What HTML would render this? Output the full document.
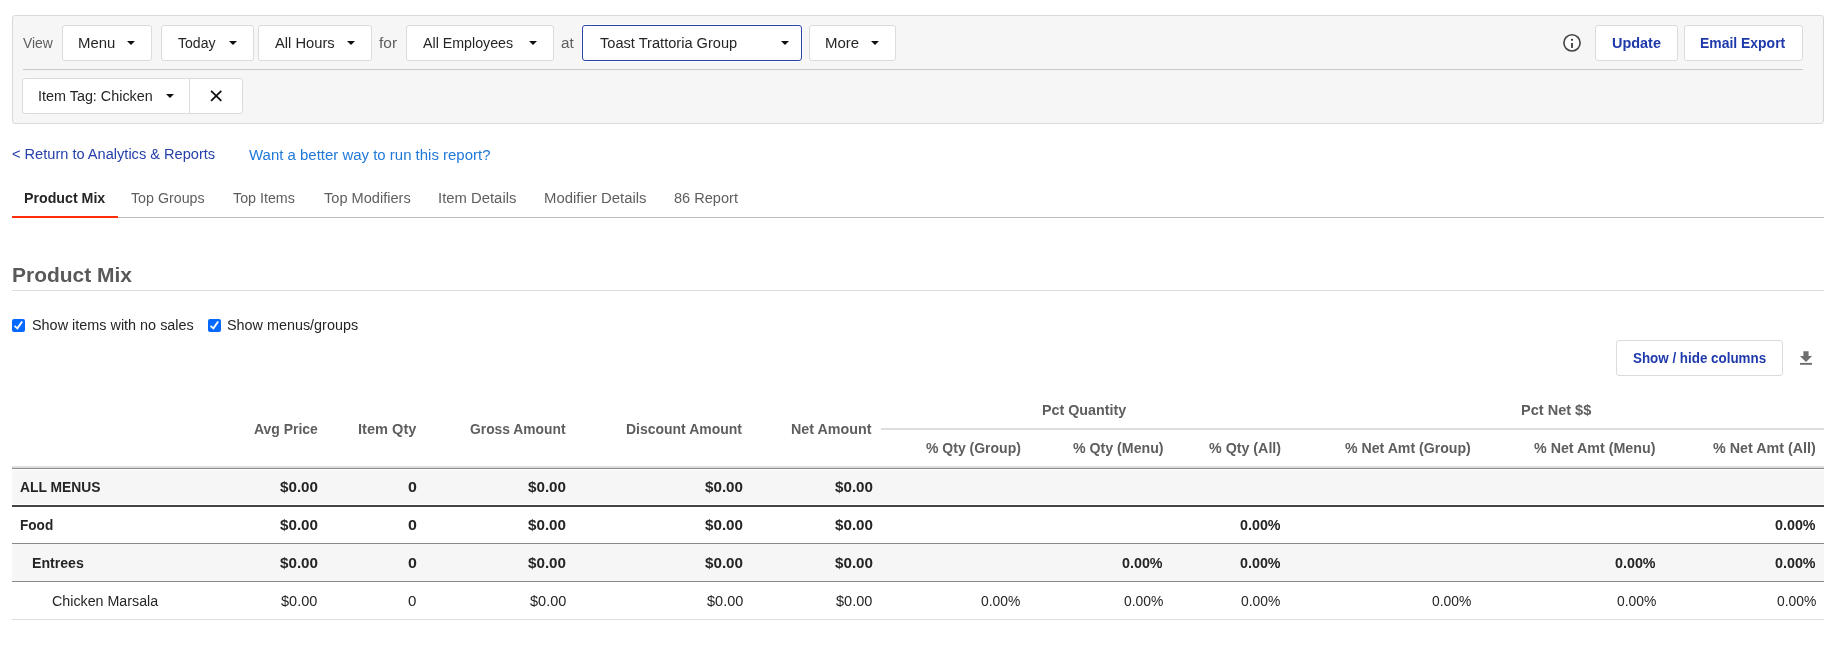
<!DOCTYPE html>
<html><head><meta charset="utf-8"><title>Product Mix</title>
<style>
*{box-sizing:border-box;margin:0;padding:0}
html,body{width:1835px;height:661px;background:#fff;overflow:hidden}
body{font-family:"Liberation Sans",sans-serif;font-size:14px;color:#252525;position:relative}
#w{position:absolute;left:0;top:0;width:1835px;height:661px;will-change:transform}
.a{position:absolute;display:block}
.t{position:absolute;white-space:nowrap;transform-origin:0 0}
.btn{background:#fff;border:1px solid #dbdbdb;border-radius:3px}
</style></head><body>
<div id="w">
<div class="a" style="left:12px;top:15px;width:1812px;height:109px;background:#f6f6f6;border:1px solid #d9d9d9;border-radius:3px;"></div>
<div class="t" style="left:23.44px;top:35.00px;font-size:14px;line-height:16px;color:#5e5e5e;transform:scaleX(0.9928);">View</div>
<div class="a btn" style="left:62px;top:25px;width:90px;height:36px;"></div>
<div class="t" style="left:78.18px;top:35.00px;font-size:14px;line-height:16px;color:#252525;transform:scaleX(1.0655);">Menu</div>
<svg class="a" style="left:127px;top:41px" width="8" height="5" viewBox="0 0 8 5"><path d="M0 0h8L4 4.1z" fill="#111"/></svg>
<div class="a btn" style="left:161px;top:25px;width:93px;height:36px;"></div>
<div class="t" style="left:177.68px;top:35.00px;font-size:14px;line-height:16px;color:#252525;transform:scaleX(1.0060);">Today</div>
<svg class="a" style="left:229px;top:41px" width="8" height="5" viewBox="0 0 8 5"><path d="M0 0h8L4 4.1z" fill="#111"/></svg>
<div class="a btn" style="left:258px;top:25px;width:114px;height:36px;"></div>
<div class="t" style="left:275.37px;top:35.00px;font-size:14px;line-height:16px;color:#252525;transform:scaleX(1.0505);">All Hours</div>
<svg class="a" style="left:347px;top:41px" width="8" height="5" viewBox="0 0 8 5"><path d="M0 0h8L4 4.1z" fill="#111"/></svg>
<div class="t" style="left:379.38px;top:35.00px;font-size:14px;line-height:16px;color:#5e5e5e;transform:scaleX(1.1064);">for</div>
<div class="a btn" style="left:406px;top:25px;width:148px;height:36px;"></div>
<div class="t" style="left:422.97px;top:35.00px;font-size:14px;line-height:16px;color:#252525;transform:scaleX(1.0162);">All Employees</div>
<svg class="a" style="left:529px;top:41px" width="8" height="5" viewBox="0 0 8 5"><path d="M0 0h8L4 4.1z" fill="#111"/></svg>
<div class="t" style="left:560.95px;top:35.00px;font-size:14px;line-height:16px;color:#5e5e5e;transform:scaleX(1.0930);">at</div>
<div class="a btn" style="left:582px;top:25px;width:220px;height:36px;border:1px solid #2a44a8;box-shadow:0 0 0 1px #fcfcfa;"></div>
<div class="t" style="left:599.67px;top:35.00px;font-size:14px;line-height:16px;color:#252525;transform:scaleX(1.0434);">Toast Trattoria Group</div>
<svg class="a" style="left:781px;top:41px" width="8" height="5" viewBox="0 0 8 5"><path d="M0 0h8L4 4.1z" fill="#111"/></svg>
<div class="a btn" style="left:809px;top:25px;width:87px;height:36px;"></div>
<div class="t" style="left:825.17px;top:35.00px;font-size:14px;line-height:16px;color:#252525;transform:scaleX(1.0688);">More</div>
<svg class="a" style="left:871px;top:41px" width="8" height="5" viewBox="0 0 8 5"><path d="M0 0h8L4 4.1z" fill="#111"/></svg>
<svg class="a" style="left:1562px;top:33px" width="20" height="20" viewBox="0 0 20 20"><circle cx="10" cy="9.85" r="8.1" fill="#fdfdfd" stroke="#454545" stroke-width="1.6"/><rect x="9.1" y="10" width="1.8" height="4.9" fill="#3a3a3a"/><circle cx="10" cy="6.85" r="1.1" fill="#333"/></svg>
<div class="a btn" style="left:1595px;top:25px;width:82.5px;height:36px;"></div>
<div class="t" style="left:1611.73px;top:35.00px;font-size:14px;line-height:16px;color:#1e39aa;transform:scaleX(1.0319);font-weight:bold;">Update</div>
<div class="a btn" style="left:1684px;top:25px;width:118.5px;height:36px;"></div>
<div class="t" style="left:1700.27px;top:35.00px;font-size:14px;line-height:16px;color:#1e39aa;transform:scaleX(0.9956);font-weight:bold;">Email Export</div>
<div class="a" style="left:23px;top:69px;width:1780px;height:1px;background:#c9c9c9;"></div>
<div class="a btn" style="left:22px;top:78px;width:168px;height:36px;border-radius:3px 0 0 3px;"></div>
<div class="t" style="left:37.87px;top:88.00px;font-size:14px;line-height:16px;color:#252525;transform:scaleX(1.0269);">Item Tag: Chicken</div>
<svg class="a" style="left:166px;top:94px" width="8" height="5" viewBox="0 0 8 5"><path d="M0 0h8L4 4.1z" fill="#111"/></svg>
<div class="a btn" style="left:189px;top:78px;width:53.5px;height:36px;border-radius:0 3px 3px 0;"></div>
<svg class="a" style="left:209px;top:89px" width="14" height="14" viewBox="0 0 14 14"><path d="M2.1 1.9L12.3 11.9M12.3 1.9L2.1 11.9" stroke="#111" stroke-width="1.8" fill="none"/></svg>
<div class="t" style="left:11.98px;top:146.00px;font-size:14px;line-height:16px;color:#2540ab;transform:scaleX(1.0421);">&lt; Return to Analytics &amp; Reports</div>
<div class="t" style="left:249.33px;top:147.00px;font-size:14px;line-height:16px;color:#2079d8;transform:scaleX(1.0688);">Want a better way to run this report?</div>
<div class="t" style="left:23.65px;top:190.00px;font-size:14px;line-height:16px;color:#252525;transform:scaleX(1.0142);font-weight:bold;">Product Mix</div>
<div class="t" style="left:130.68px;top:190.00px;font-size:14px;line-height:16px;color:#5e5e5e;transform:scaleX(1.0177);">Top Groups</div>
<div class="t" style="left:232.68px;top:190.00px;font-size:14px;line-height:16px;color:#5e5e5e;transform:scaleX(1.0192);">Top Items</div>
<div class="t" style="left:323.67px;top:190.00px;font-size:14px;line-height:16px;color:#5e5e5e;transform:scaleX(1.0418);">Top Modifiers</div>
<div class="t" style="left:438.43px;top:190.00px;font-size:14px;line-height:16px;color:#5e5e5e;transform:scaleX(1.0608);">Item Details</div>
<div class="t" style="left:544.38px;top:190.00px;font-size:14px;line-height:16px;color:#5e5e5e;transform:scaleX(1.0631);">Modifier Details</div>
<div class="t" style="left:673.77px;top:190.00px;font-size:14px;line-height:16px;color:#5e5e5e;transform:scaleX(1.0400);">86 Report</div>
<div class="a" style="left:12px;top:217px;width:1812px;height:1px;background:#bcbcbc;"></div>
<div class="a" style="left:12px;top:216px;width:106px;height:2px;background:#ff2d08;"></div>
<div class="t" style="left:11.80px;top:263.00px;font-size:21px;line-height:24px;color:#595959;transform:scaleX(0.9982);font-weight:bold;">Product Mix</div>
<div class="a" style="left:12px;top:290px;width:1812px;height:1px;background:#dcdcdc;"></div>
<svg class="a" style="left:12px;top:319px" width="13" height="13" viewBox="0 0 13 13"><rect width="13" height="13" rx="2" fill="#0569ff"/><path d="M2.5 6.9L5.4 9.4L10.2 2.5" stroke="#fff" stroke-width="1.9" fill="none"/></svg>
<div class="t" style="left:31.75px;top:317.00px;font-size:14px;line-height:16px;color:#252525;transform:scaleX(1.0292);">Show items with no sales</div>
<svg class="a" style="left:208px;top:319px" width="13" height="13" viewBox="0 0 13 13"><rect width="13" height="13" rx="2" fill="#0569ff"/><path d="M2.5 6.9L5.4 9.4L10.2 2.5" stroke="#fff" stroke-width="1.9" fill="none"/></svg>
<div class="t" style="left:227.15px;top:317.00px;font-size:14px;line-height:16px;color:#252525;transform:scaleX(1.0270);">Show menus/groups</div>
<div class="a btn" style="left:1616px;top:340px;width:167px;height:36px;"></div>
<div class="t" style="left:1633.01px;top:350.00px;font-size:14px;line-height:16px;color:#1e39aa;transform:scaleX(0.9562);font-weight:bold;">Show / hide columns</div>
<svg class="a" style="left:1799px;top:350px" width="14" height="16" viewBox="0 0 14 16"><path d="M4.4 1.2h5.2v4.7h3.5L7 12.1 0.9 5.9h3.5z" fill="#6e6e6e"/><rect x="1" y="12.9" width="12" height="1.9" fill="#6e6e6e"/></svg>
<div class="t" style="left:253.65px;top:421.00px;font-size:14px;line-height:16px;color:#5e5e5e;transform:scaleX(0.9959);font-weight:bold;">Avg Price</div>
<div class="t" style="left:358.02px;top:421.00px;font-size:14px;line-height:16px;color:#5e5e5e;transform:scaleX(1.0418);font-weight:bold;">Item Qty</div>
<div class="t" style="left:470.03px;top:421.00px;font-size:14px;line-height:16px;color:#5e5e5e;transform:scaleX(0.9877);font-weight:bold;">Gross Amount</div>
<div class="t" style="left:626.27px;top:421.00px;font-size:14px;line-height:16px;color:#5e5e5e;transform:scaleX(0.9979);font-weight:bold;">Discount Amount</div>
<div class="t" style="left:791.44px;top:421.00px;font-size:14px;line-height:16px;color:#5e5e5e;transform:scaleX(1.0215);font-weight:bold;">Net Amount</div>
<div class="t" style="left:1042.24px;top:402.00px;font-size:14px;line-height:16px;color:#5e5e5e;transform:scaleX(1.0203);font-weight:bold;">Pct Quantity</div>
<div class="t" style="left:1520.83px;top:402.00px;font-size:14px;line-height:16px;color:#5e5e5e;transform:scaleX(1.0381);font-weight:bold;">Pct Net $$</div>
<div class="a" style="left:881px;top:428px;width:943px;height:2px;background:#dddddd;"></div>
<div class="t" style="left:926.25px;top:440.00px;font-size:14px;line-height:16px;color:#5e5e5e;transform:scaleX(0.9996);font-weight:bold;">% Qty (Group)</div>
<div class="t" style="left:1072.85px;top:440.00px;font-size:14px;line-height:16px;color:#5e5e5e;transform:scaleX(1.0125);font-weight:bold;">% Qty (Menu)</div>
<div class="t" style="left:1209.05px;top:440.00px;font-size:14px;line-height:16px;color:#5e5e5e;transform:scaleX(1.0182);font-weight:bold;">% Qty (All)</div>
<div class="t" style="left:1344.95px;top:440.00px;font-size:14px;line-height:16px;color:#5e5e5e;transform:scaleX(1.0091);font-weight:bold;">% Net Amt (Group)</div>
<div class="t" style="left:1534.04px;top:440.00px;font-size:14px;line-height:16px;color:#5e5e5e;transform:scaleX(1.0183);font-weight:bold;">% Net Amt (Menu)</div>
<div class="t" style="left:1712.84px;top:440.00px;font-size:14px;line-height:16px;color:#5e5e5e;transform:scaleX(1.0213);font-weight:bold;">% Net Amt (All)</div>
<div class="a" style="left:12px;top:466px;width:1812px;height:2px;background:#dedede;"></div>
<div class="a" style="left:12px;top:468px;width:1812px;height:1px;background:#8c8c8c;"></div>
<div class="a" style="left:12px;top:470px;width:1812px;height:34px;background:#f6f6f6;"></div>
<div class="a" style="left:12px;top:505px;width:1812px;height:2px;background:#444444;"></div>
<div class="a" style="left:12px;top:543px;width:1812px;height:1px;background:#8a8a8a;"></div>
<div class="a" style="left:12px;top:544px;width:1812px;height:37px;background:#f6f6f6;"></div>
<div class="a" style="left:12px;top:581px;width:1812px;height:1px;background:#8a8a8a;"></div>
<div class="a" style="left:12px;top:619px;width:1812px;height:1px;background:#dddddd;"></div>
<div class="t" style="left:20.26px;top:479.00px;font-size:14px;line-height:16px;color:#252525;transform:scaleX(0.9880);font-weight:bold;">ALL MENUS</div>
<div class="t" style="left:279.80px;top:479.00px;font-size:14px;line-height:16px;color:#252525;transform:scaleX(1.0853);font-weight:bold;">$0.00</div>
<div class="t" style="left:407.97px;top:479.00px;font-size:14px;line-height:16px;color:#252525;transform:scaleX(1.1414);font-weight:bold;">0</div>
<div class="t" style="left:528.10px;top:479.00px;font-size:14px;line-height:16px;color:#252525;transform:scaleX(1.0853);font-weight:bold;">$0.00</div>
<div class="t" style="left:705.10px;top:479.00px;font-size:14px;line-height:16px;color:#252525;transform:scaleX(1.0853);font-weight:bold;">$0.00</div>
<div class="t" style="left:834.60px;top:479.00px;font-size:14px;line-height:16px;color:#252525;transform:scaleX(1.0853);font-weight:bold;">$0.00</div>
<div class="t" style="left:19.89px;top:517.00px;font-size:14px;line-height:16px;color:#252525;transform:scaleX(0.9707);font-weight:bold;">Food</div>
<div class="t" style="left:279.80px;top:517.00px;font-size:14px;line-height:16px;color:#252525;transform:scaleX(1.0853);font-weight:bold;">$0.00</div>
<div class="t" style="left:407.97px;top:517.00px;font-size:14px;line-height:16px;color:#252525;transform:scaleX(1.1414);font-weight:bold;">0</div>
<div class="t" style="left:528.10px;top:517.00px;font-size:14px;line-height:16px;color:#252525;transform:scaleX(1.0853);font-weight:bold;">$0.00</div>
<div class="t" style="left:705.10px;top:517.00px;font-size:14px;line-height:16px;color:#252525;transform:scaleX(1.0853);font-weight:bold;">$0.00</div>
<div class="t" style="left:834.60px;top:517.00px;font-size:14px;line-height:16px;color:#252525;transform:scaleX(1.0853);font-weight:bold;">$0.00</div>
<div class="t" style="left:1240.13px;top:517.00px;font-size:14px;line-height:16px;color:#252525;transform:scaleX(1.0213);font-weight:bold;">0.00%</div>
<div class="t" style="left:1775.23px;top:517.00px;font-size:14px;line-height:16px;color:#252525;transform:scaleX(1.0213);font-weight:bold;">0.00%</div>
<div class="t" style="left:31.65px;top:555.00px;font-size:14px;line-height:16px;color:#252525;transform:scaleX(1.0091);font-weight:bold;">Entrees</div>
<div class="t" style="left:279.80px;top:555.00px;font-size:14px;line-height:16px;color:#252525;transform:scaleX(1.0853);font-weight:bold;">$0.00</div>
<div class="t" style="left:407.97px;top:555.00px;font-size:14px;line-height:16px;color:#252525;transform:scaleX(1.1414);font-weight:bold;">0</div>
<div class="t" style="left:528.10px;top:555.00px;font-size:14px;line-height:16px;color:#252525;transform:scaleX(1.0853);font-weight:bold;">$0.00</div>
<div class="t" style="left:705.10px;top:555.00px;font-size:14px;line-height:16px;color:#252525;transform:scaleX(1.0853);font-weight:bold;">$0.00</div>
<div class="t" style="left:834.60px;top:555.00px;font-size:14px;line-height:16px;color:#252525;transform:scaleX(1.0853);font-weight:bold;">$0.00</div>
<div class="t" style="left:1122.33px;top:555.00px;font-size:14px;line-height:16px;color:#252525;transform:scaleX(1.0213);font-weight:bold;">0.00%</div>
<div class="t" style="left:1240.13px;top:555.00px;font-size:14px;line-height:16px;color:#252525;transform:scaleX(1.0213);font-weight:bold;">0.00%</div>
<div class="t" style="left:1615.23px;top:555.00px;font-size:14px;line-height:16px;color:#252525;transform:scaleX(1.0213);font-weight:bold;">0.00%</div>
<div class="t" style="left:1775.23px;top:555.00px;font-size:14px;line-height:16px;color:#252525;transform:scaleX(1.0213);font-weight:bold;">0.00%</div>
<div class="t" style="left:51.68px;top:593.00px;font-size:14px;line-height:16px;color:#252525;transform:scaleX(1.0188);">Chicken Marsala</div>
<div class="t" style="left:281.44px;top:593.00px;font-size:14px;line-height:16px;color:#252525;transform:scaleX(1.0368);">$0.00</div>
<div class="t" style="left:408.41px;top:593.00px;font-size:14px;line-height:16px;color:#252525;transform:scaleX(1.0758);">0</div>
<div class="t" style="left:529.74px;top:593.00px;font-size:14px;line-height:16px;color:#252525;transform:scaleX(1.0368);">$0.00</div>
<div class="t" style="left:706.74px;top:593.00px;font-size:14px;line-height:16px;color:#252525;transform:scaleX(1.0368);">$0.00</div>
<div class="t" style="left:836.24px;top:593.00px;font-size:14px;line-height:16px;color:#252525;transform:scaleX(1.0368);">$0.00</div>
<div class="t" style="left:981.16px;top:593.00px;font-size:14px;line-height:16px;color:#252525;transform:scaleX(0.9909);">0.00%</div>
<div class="t" style="left:1123.66px;top:593.00px;font-size:14px;line-height:16px;color:#252525;transform:scaleX(0.9909);">0.00%</div>
<div class="t" style="left:1241.46px;top:593.00px;font-size:14px;line-height:16px;color:#252525;transform:scaleX(0.9909);">0.00%</div>
<div class="t" style="left:1431.56px;top:593.00px;font-size:14px;line-height:16px;color:#252525;transform:scaleX(0.9909);">0.00%</div>
<div class="t" style="left:1616.56px;top:593.00px;font-size:14px;line-height:16px;color:#252525;transform:scaleX(0.9909);">0.00%</div>
<div class="t" style="left:1776.56px;top:593.00px;font-size:14px;line-height:16px;color:#252525;transform:scaleX(0.9909);">0.00%</div>
</div>
</body></html>
